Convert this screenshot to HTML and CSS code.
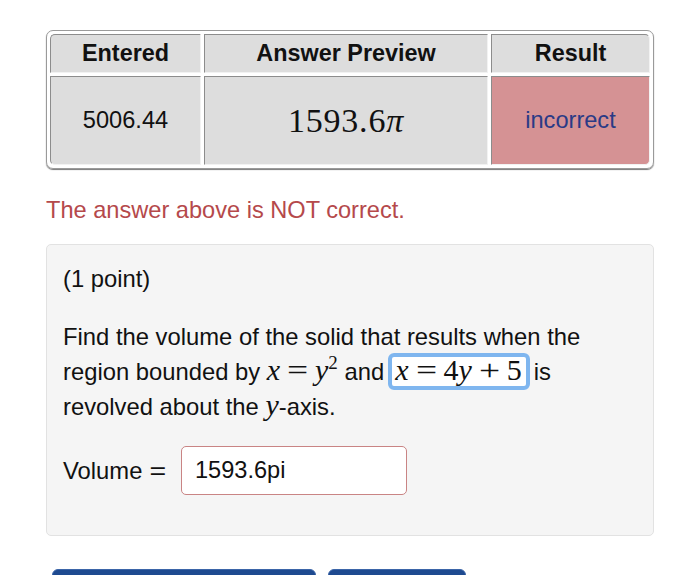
FILE: index.html
```html
<!DOCTYPE html>
<html>
<head>
<meta charset="utf-8">
<link rel="stylesheet" href="styles.css">
</head>
<body>
<div class="page">
  <table class="results">
    <tr>
      <th class="c1">Entered</th>
      <th class="c2">Answer Preview</th>
      <th class="c3">Result</th>
    </tr>
    <tr class="body-row">
      <td>5006.44</td>
      <td class="preview">1593.6<i>π</i></td>
      <td class="bad">incorrect</td>
    </tr>
  </table>

  <p class="warn">The answer above is NOT correct.</p>

  <div class="problem">
    <p class="pts">(1 point)</p>
    <p class="text">Find the volume of the solid that results when the region bounded by <span class="m"><i>x</i><span class="op">=</span><i>y</i><sup>2</sup></span> and<span class="hl"><span class="m"><i>x</i><span class="op">=</span>4<i>y</i><span class="op">+</span>5</span></span>is revolved about the <span class="m"><i>y</i></span>-axis.</p>
    <div class="answer">
      <span class="lbl">Volume <span class="eq">=</span></span>
      <div class="input">1593.6pi</div>
    </div>
  </div>

  <div class="buttons">
    <div class="btn b1"></div>
    <div class="btn b2"></div>
  </div>
</div>
</body>
</html>
```

FILE: styles.css
```css
html, body {
  margin: 0;
  padding: 0;
  overflow: hidden;
  background: #fff;
}
.page {
  width: 608px;
  margin-left: 46px;
  padding-top: 30px;
  font-family: "Liberation Sans", Arial, sans-serif;
  color: #111;
}
.results {
  width: 608px;
  border-collapse: separate;
  border-spacing: 3px;
  border: 1px solid #9a9a9a;
  border-radius: 7px;
  box-shadow: 0 1px 1px #777;
}
.results th, .results td {
  background: #dddddd;
  border-top: 1px solid #8c8c8c;
  border-left: 1px solid #8c8c8c;
  border-right: 1px solid #f2f2f2;
  border-bottom: 1px solid #f2f2f2;
  text-align: center;
  padding: 0;
}
.results th {
  height: 37px;
  font-size: 23.4px;
  font-weight: bold;
}
.results .c1 { width: 149px; }
.results .c2 { width: 282px; }
.results th:first-child { border-top-left-radius: 5px; }
.results th:last-child { border-top-right-radius: 5px; }
.results td:first-child { border-bottom-left-radius: 5px; }
.results td:last-child { border-bottom-right-radius: 5px; }
.body-row td {
  height: 87px;
  font-size: 23.6px;
}
.results td.preview {
  font-family: "Liberation Serif", "Times New Roman", serif;
  font-size: 34px;
  letter-spacing: 0.8px;
}
.results td.bad {
  background: #d59294;
  color: #2a3a86;
}
.warn {
  margin: 28px 0 0 0;
  font-size: 23.6px;
  line-height: 26px;
  color: #b5494b;
}
.problem {
  margin-top: 21px;
  background: #f5f5f5;
  border: 1px solid #e2e2e2;
  border-radius: 5px;
  padding: 16px 16px 40px 16px;
  font-size: 23.8px;
  line-height: 35px;
}
.problem p {
  margin: 0;
}
.problem .text {
  margin-top: 23px;
}
.m {
  font-family: "Liberation Serif", "Times New Roman", serif;
  font-size: 30px;
  line-height: 0;
}
.m .op {
  display: inline-block;
  margin: 0 9px;
  transform: scaleX(1.25);
}
.m sup {
  font-size: 19px;
  line-height: 0;
}
.eq {
  display: inline-block;
  transform: scaleX(1.2);
  margin-left: 2px;
}
.hl {
  background: #fff;
  border: 4px solid #7fb6ef;
  border-radius: 6px;
  padding: 1px 4px 1px 3px;
  margin: 0 4px 0 4px;
}
.answer {
  display: flex;
  align-items: center;
  margin-top: 22px;
  gap: 16px;
}
.input {
  width: 211px;
  height: 47px;
  background: #fff;
  border: 1px solid #c98484;
  border-radius: 5px;
  padding-left: 13px;
  line-height: 47px;
  font-size: 23.6px;
}
.buttons {
  display: flex;
  gap: 12px;
  margin-top: 33px;
  padding-left: 6px;
}
.btn {
  height: 40px;
  background: #1e4a90;
  border: 1px solid #3b65a8;
  border-radius: 6px;
}
.b1 { width: 262px; }
.b2 { width: 136px; }
```
